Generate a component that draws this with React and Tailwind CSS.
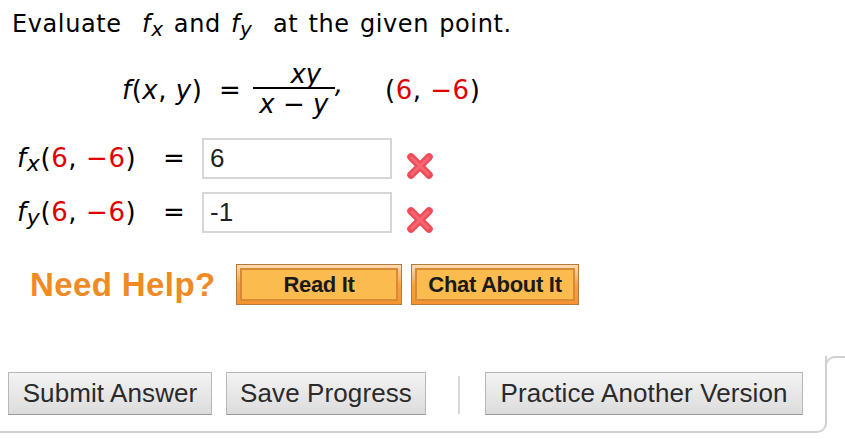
import React from "react";

const RED = "text-[#e00000]";
const ARIAL = { fontFamily: '"Liberation Sans", Arial, sans-serif' };

function Xmark() {
  return (
    <svg width="28" height="28" viewBox="0 0 28 28">
      <g strokeLinecap="round">
        <line x1="5" y1="5" x2="23" y2="23" stroke="#f04b58" strokeWidth="7.5" />
        <line x1="23" y1="5" x2="5" y2="23" stroke="#f04b58" strokeWidth="7.5" />
        <line x1="6" y1="6" x2="22" y2="22" stroke="#f56873" strokeWidth="3" />
        <line x1="22" y1="6" x2="6" y2="22" stroke="#f56873" strokeWidth="3" />
      </g>
    </svg>
  );
}

function OrangeBtn({ children, w }) {
  return (
    <div className={`${w} h-[41px] border border-[#b5793b] bg-gradient-to-b from-[#fcdcb2] via-[#f7a13f] to-[#f59431] p-[3px] flex`}>
      <div className="flex-1 border-2 border-[#d98a36] bg-[#fbbb4f] flex items-center justify-center text-[22px] font-bold text-[#1a1a1a] tracking-[-0.3px]" style={ARIAL}>
        {children}
      </div>
    </div>
  );
}

function GrayBtn({ children, w }) {
  return (
    <div className={`${w} h-[43px] border border-[#b8b8b8] border-b-[#999] bg-gradient-to-b from-[#f3f3f3] to-[#dcdcdc] flex items-center justify-center text-[26px] text-[#2a2a2a] tracking-[0.1px]`} style={ARIAL}>
      {children}
    </div>
  );
}

function Row({ sub, value, top }) {
  return (
    <div className={`flex items-center h-[41px] ${top}`}>
      <div className="w-[163px] flex items-center pl-[17px] text-[26px] text-black tracking-[0.6px]">
        <span className="italic">f</span>
        <sub className="italic text-[22px] relative top-[5px] align-baseline">{sub}</sub>
        <span>(</span>
        <span className={RED}>6</span>
        <span>,&nbsp;</span>
        <span className={RED}>−6</span>
        <span>)</span>
      </div>
      <div className="w-[39px] text-[26px] text-black">=</div>
      <div className="w-[190px] h-[41px] border-2 border-[#d6d6d6] bg-white flex items-center pl-[6px] text-[26px] text-[#222]" style={ARIAL}>
        {value}
      </div>
      <div className="ml-[14px] mt-[15px]">
        <Xmark />
      </div>
    </div>
  );
}

export default function App() {
  return (
    <div className="w-[845px] h-[440px] bg-white relative overflow-hidden" style={{ fontFamily: '"DejaVu Sans", Verdana, sans-serif' }}>
      <div className="pl-[12px] pt-[9px] text-[24px] leading-[30px] text-black tracking-[0.6px] [word-spacing:2px]">
        Evaluate&nbsp;&nbsp;<span className="italic">f</span>
        <sub className="italic text-[20px] relative top-[4px] align-baseline">x</sub> and <span className="italic">f</span>
        <sub className="italic text-[20px] relative top-[4px] align-baseline">y</sub>&nbsp;&nbsp;at the given point.
      </div>

      <div className="flex items-center ml-[122px] mt-[22px] h-[58px] text-[26px] text-black">
        <div className="w-[80px] flex items-center tracking-[0.5px]">
          <span className="italic">f</span>
          <span>(</span>
          <span className="italic">x</span>
          <span>,&nbsp;</span>
          <span className="italic">y</span>
          <span>)</span>
        </div>
        <span className="ml-[17px]">=</span>
        <div className="ml-[12px] flex flex-col items-center w-[82px]">
          <div className="italic leading-[26px] pl-[24px]">xy</div>
          <div className="w-full h-[2px] bg-black"></div>
          <div className="leading-[30px]"><span className="italic">x</span> − <span className="italic">y</span></div>
        </div>
        <span className="italic mt-[-12px]">,</span>
        <div className="ml-[42px] flex items-center tracking-[0.5px]">
          <span>(</span>
          <span className={RED}>6</span>
          <span>,&nbsp;</span>
          <span className={RED}>−6</span>
          <span>)</span>
        </div>
      </div>

      <Row sub="x" value="6" top="mt-[19px]" />
      <Row sub="y" value="-1" top="mt-[13px]" />

      <div className="flex items-center mt-[31px] h-[41px]">
        <div className="ml-[30px] w-[206px] text-[33px] font-bold text-[#f08a24] tracking-[0.4px]" style={ARIAL}>
          Need Help?
        </div>
        <OrangeBtn w="w-[166px]">Read It</OrangeBtn>
        <div className="w-[9px]"></div>
        <OrangeBtn w="w-[168px]">Chat About It</OrangeBtn>
      </div>

      <div className="flex items-start mt-[51px]">
        <div className="w-[827px] h-[77px] border-b-2 border-r-2 border-[#d0d0d0] rounded-br-[10px] flex items-start pt-[16px] pl-[8px]">
          <GrayBtn w="w-[204px]">Submit Answer</GrayBtn>
          <div className="w-[14px]"></div>
          <GrayBtn w="w-[200px]">Save Progress</GrayBtn>
          <div className="ml-[32px] mt-[4px] w-[2px] h-[38px] bg-[#d8d8d8]"></div>
          <div className="w-[25px]"></div>
          <GrayBtn w="w-[318px]">Practice Another Version</GrayBtn>
        </div>
        <div className="flex-1 h-[10px] border-t-2 border-l-2 border-[#d0d0d0] rounded-tl-[10px] -ml-[2px]"></div>
      </div>
    </div>
  );
}
